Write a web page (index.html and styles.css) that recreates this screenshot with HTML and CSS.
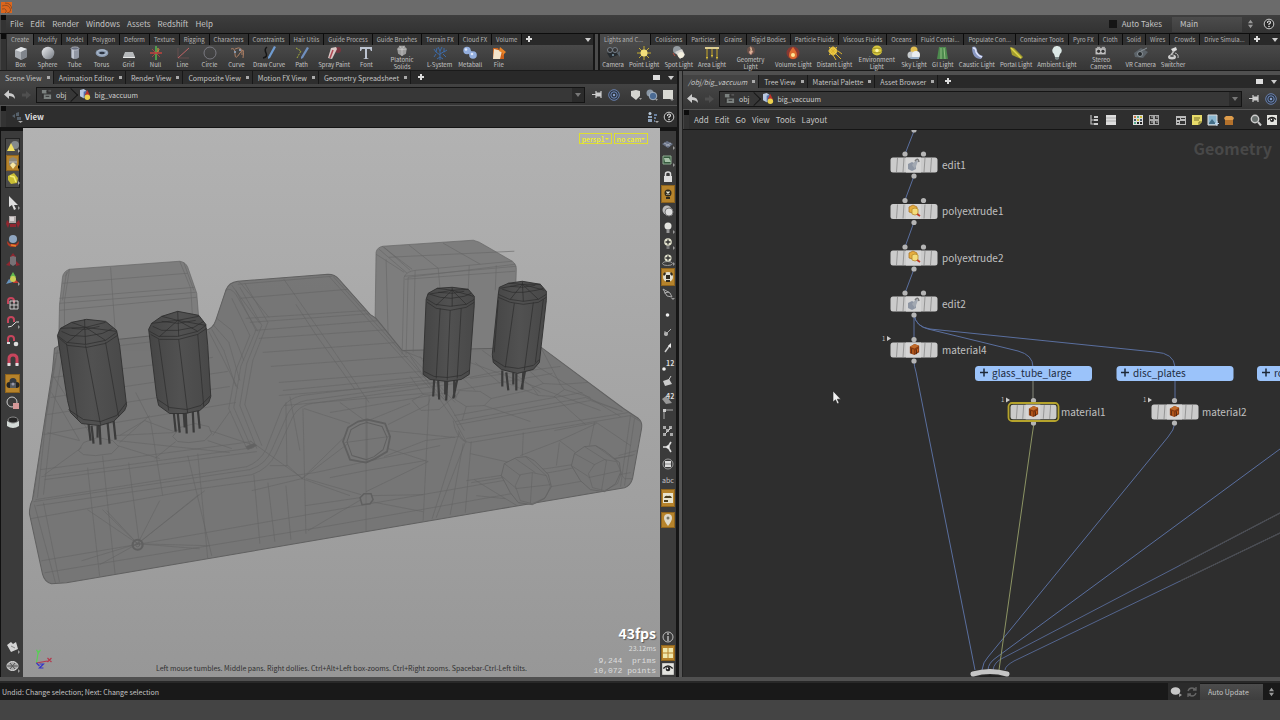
FILE: index.html
```html
<!DOCTYPE html>
<html lang="en">
<head>
<meta charset="utf-8">
<title>big_vaccuum</title>
<link rel="stylesheet" href="styles.css">
</head>
<body>
<svg class="defs" aria-hidden="true">
    <defs>
        <linearGradient id="steel" x1="0" y1="0" x2="1" y2="1"><stop offset="0" stop-color="#eef0f3"/><stop offset="1" stop-color="#72777f"/></linearGradient>
        <linearGradient id="ground" x1="0" y1="0" x2="0" y2="1"><stop offset="0" stop-color="#b2b2b2"/><stop offset="1" stop-color="#979797"/></linearGradient>
        <linearGradient id="tube" x1="0" y1="0" x2="1" y2="0"><stop offset="0" stop-color="#454545"/><stop offset=".5" stop-color="#515151"/><stop offset="1" stop-color="#484848"/></linearGradient>
        <clipPath id="chassis"><path d="M30 513Q30 504 33 499L53 370L55 348L60 345L205 330Q213 329 216 320L226 290Q229 282 238 281L328 274Q335 274 339 279L370 314L376 318L402 350L541 347L623 408L638 418Q642 421 641 428L632 478Q630 485 624 487L330 537L67 582L52 583Q45 581 43 573z"/></clipPath>
    </defs>
    <!-- shelf tools, 14 x 14 -->
    <symbol id="box" viewBox="0 0 14 14"><path d="M1 4l6-3 6 2v8l-6 3-6-3z" fill="#a9adb2"/><path d="M1 4l6 2 6-3-6-2z" fill="#e2e5e8"/><path d="M7 6l6-3v8l-6 3z" fill="#80858c"/></symbol>
    <symbol id="sphere" viewBox="0 0 14 14"><circle cx="7" cy="7" r="6.3" fill="url(#steel)"/></symbol>
    <symbol id="cyl" viewBox="0 0 14 14"><path d="M3 2.500v9q4 3 8 0v-9z" fill="#9297a3"/><path d="M4 3v9l2 .8V3z" fill="#c2c6d0"/><ellipse cx="7" cy="2.500" rx="4" ry="1.600" fill="#6a7080" stroke="#c5c9d2" stroke-width=".7"/></symbol>
    <symbol id="torus" viewBox="0 0 14 14"><ellipse cx="7" cy="7" rx="6.400" ry="4" fill="#8c9cb2"/><ellipse cx="7" cy="6.500" rx="4.500" ry="2.500" fill="none" stroke="#b9c6d6" stroke-width=".8"/><ellipse cx="7" cy="7" rx="2.800" ry="1.200" fill="#2b3340"/></symbol>
    <symbol id="grid" viewBox="0 0 14 14"><path d="M3 6h8l2 5H1z" fill="#b5b8ba"/><path d="M1 11h12v1H1z" fill="#e8e8e8"/></symbol>
    <symbol id="null" viewBox="0 0 14 14"><path d="M7 0v14" stroke="#56b94f" stroke-width="1.500"/><path d="M1 7h12" stroke="#c1443e" stroke-width="1.500"/><path d="M3 3l8 8M11 3l-8 8" stroke="#c1443e" stroke-width=".8"/><path d="M9 2v4" stroke="#dab945"/></symbol>
    <symbol id="line" viewBox="0 0 14 14"><path d="M2 2v10h11" stroke="#755" fill="none" stroke-width=".7"/><path d="M2 12L13 2" stroke="#c26466"/></symbol>
    <symbol id="circle" viewBox="0 0 14 14"><circle cx="7" cy="7" r="6" fill="none" stroke="#87878f" stroke-width=".8"/></symbol>
    <symbol id="curve" viewBox="0 0 14 14"><path d="M1 3q4-2 4 5t5-1 3 5M5 3q8-4 7 6" stroke="#b58568" fill="none" stroke-width=".9"/><path d="M4 5h2v2H4zM9 3h2v2H9z" fill="#8897ac"/></symbol>
    <symbol id="pen" viewBox="0 0 14 14"><path d="M1 12q5-1 3-5T5 1" fill="none" stroke="#151515" stroke-width="1.500"/><path d="M12 0l2 1-6 11-2 1V11z" fill="#6f9bd0"/></symbol>
    <symbol id="path" viewBox="0 0 14 14"><path d="M1 2l5 3-4 7" fill="none" stroke="#a6ae3b" stroke-dasharray="2 1"/><path d="M12 1l2 1-6 10-2 1V11z" fill="#6f8fbd"/></symbol>
    <symbol id="spray" viewBox="0 0 14 14"><circle cx="11" cy="4" r="3" fill="#8c2f3c" opacity=".7"/><path d="M4 2l5-1 1 2-5 10-4-1z" fill="#d9c7c5"/><path d="M6 4l-3 8" stroke="#b04650" stroke-width="1.500"/></symbol>
    <symbol id="font" viewBox="0 0 14 14"><path d="M1 1h12v4h-1l-1-2H8v9l2 1H4l2-1V3H3L2 5H1z" fill="#bcc3d0"/></symbol>
    <symbol id="platonic" viewBox="0 0 14 14"><path d="M4 1h6l3 4-1 6-5 3-5-3-1-6z" fill="#9c9c9c"/><path d="M4 1l3 5 3-5M1 5l6 1 6-1M7 6v8" stroke="#d4d4d4" fill="none" stroke-width=".7"/></symbol>
    <symbol id="lsystem" viewBox="0 0 14 14"><path d="M7 14V5M7 9L3 6M7 8l5-3M3 6L1 3M3 6l1-4M7 5L5 1M7 5l2-4M11 6l3-2M11 6V2M3 8l-2 3M10 8l3 3M7 11l-3 2M7 11l3 2" stroke="#3c6ba9" fill="none"/></symbol>
    <symbol id="metaball" viewBox="0 0 14 14"><path d="M4 4l6 5" stroke="#8ea5d0" stroke-width="4"/><circle cx="4" cy="4.500" r="3.700" fill="#93aedd"/><circle cx="10" cy="9" r="3.800" fill="#93aedd"/><circle cx="3" cy="3.500" r="1.300" fill="#dce6fa"/><circle cx="9" cy="8" r="1.300" fill="#dce6fa"/></symbol>
    <symbol id="file" viewBox="0 0 14 14"><path d="M1 2h5l1 2h5v9H1z" fill="#c95f19"/><path d="M2 3l8 2-2 8H1z" fill="#f3e3ca"/><path d="M8 1l6 5-4 4 1-3-4-2z" fill="#e88327"/></symbol>
    <symbol id="camera" viewBox="0 0 14 14"><path d="M1 7l9-3 2 5-8 3z" fill="#252a2e"/><circle cx="4" cy="4" r="2.500" fill="#333" stroke="#77808a"/><circle cx="9" cy="4" r="2.500" fill="#333" stroke="#77808a"/><path d="M11 7l3-2v6z" fill="#58636c"/><circle cx="7" cy="9" r="1" fill="#7d98a8"/></symbol>
    <symbol id="sun" viewBox="0 0 14 14"><path d="M7 0v14M0 7h14M2 2l10 10M12 2L2 12" stroke="#c4ab2f"/><circle cx="7" cy="7" r="3.500" fill="#f3df7c"/></symbol>
    <symbol id="spot" viewBox="0 0 14 14"><circle cx="5" cy="4" r="4" fill="#949ba1"/><path d="M3 6l7-3 3 6-5 4z" fill="#d6d4d0"/><circle cx="9" cy="9" r="3" fill="#f4f0df"/><path d="M1 7l2 3" stroke="#b84d3e"/></symbol>
    <symbol id="area" viewBox="0 0 14 14"><path d="M0 1h14v2H0z" fill="#dccd91"/><path d="M2 3v9M7 3v7M12 3v9" stroke="#c9a928"/><path d="M1 11l1 3 1-3zM6 9l1 3 1-3zM11 11l1 3 1-3z" fill="#e4c83d"/></symbol>
    <symbol id="geolight" viewBox="0 0 14 14"><circle cx="7" cy="7" r="5" fill="#835949" opacity=".6"/><path d="M6 1q4 4 1 6l3 1-3 5-3-4q4-3 2-8z" fill="#c9968a"/><path d="M6 3l2 4-2 4" fill="none" stroke="#f1d6a2"/></symbol>
    <symbol id="vollight" viewBox="0 0 14 14"><circle cx="7" cy="7" r="6.500" fill="#98352d" opacity=".8"/><path d="M3 9q0-3 4-8 4 5 4 8 0 4-4 4t-4-4z" fill="#df6b2f"/><circle cx="7" cy="9" r="2" fill="#ffe796"/></symbol>
    <symbol id="distant" viewBox="0 0 14 14"><circle cx="5" cy="5" r="4" fill="#efd04d"/><path d="M5 0v10M0 5h10M1 1l8 8M9 1L1 9M8 8l5 5M5 9l3 5M10 5l4 3" stroke="#dcb32f"/></symbol>
    <symbol id="env" viewBox="0 0 14 14"><circle cx="7" cy="7" r="6.500" fill="#d8c83d"/><ellipse cx="7" cy="7" rx="6" ry="3" fill="none" stroke="#8e8124"/><circle cx="7" cy="7" r="2.200" fill="#fff8a8"/></symbol>
    <symbol id="sky" viewBox="0 0 14 14"><circle cx="7" cy="4" r="3.500" fill="#e3bf51"/><circle cx="4" cy="9" r="3.500" fill="#c8ccce"/><circle cx="9" cy="9" r="4" fill="#e9edf0"/><path d="M2 11h10v2H4z" fill="#9ab0c7"/></symbol>
    <symbol id="gi" viewBox="0 0 14 14"><path d="M3 1h7l2 12H1z" fill="#4d8a4e"/><path d="M5 2v11M8 2l1 11" stroke="#92bd82"/></symbol>
    <symbol id="caustic" viewBox="0 0 14 14"><path d="M2 1q4-2 5 3 0 4 6 6l-2 3Q2 13 2 1z" fill="#8897c2"/><path d="M3 2q3 0 3 4 2 4 6 5" stroke="#dfe4fa" fill="none" stroke-width="1.500"/></symbol>
    <symbol id="portal" viewBox="0 0 14 14"><path d="M1 1l4 1 9 9-2 2-9-4z" fill="#a39d2e"/><path d="M2 2l10 10" stroke="#dfd74c" stroke-width="1.500"/></symbol>
    <symbol id="bulb" viewBox="0 0 14 14"><path d="M7 0a4.500 4.500 0 0 0-3 8l1 3h4l1-3a4.500 4.500 0 0 0-3-8z" fill="#dce8e6"/><path d="M5 11h4v2L7 14l-2-1z" fill="#798585"/></symbol>
    <symbol id="stereo" viewBox="0 0 14 14"><path d="M0 4h13v8H0z" fill="#bbb"/><circle cx="4" cy="8" r="2.600" fill="#333" stroke="#eee" stroke-width=".7"/><circle cx="9.500" cy="8" r="2.600" fill="#333" stroke="#eee" stroke-width=".7"/><path d="M2 3h4M8 3h4" stroke="#ddd"/></symbol>
    <symbol id="vr" viewBox="0 0 14 14"><path d="M0 7l7-5 7 4-5 6-8-1z" fill="#5c6369"/><circle cx="6" cy="8" r="2.500" fill="#25292c" stroke="#8a9297"/><path d="M7 5l6-3" stroke="#8a9297"/></symbol>
    <symbol id="switcher" viewBox="0 0 14 14"><path d="M5 3l5-2 1 3-4 2z" fill="#ddd"/><path d="M8 5l-3 4" stroke="#bbb" stroke-width="1.500"/><ellipse cx="6" cy="11" rx="4" ry="2.500" fill="#ccc"/><ellipse cx="6" cy="10" rx="2" ry="1" fill="#555"/><path d="M9 7q4 1 3 5" fill="none" stroke="#bbb"/></symbol>
    <!-- pane icons -->
    <symbol id="back" viewBox="0 0 12 12"><path d="M5 1v3q6 0 6 6-2-3-6-3v3L0 5.500z" fill="currentColor"/></symbol>
    <symbol id="fwd" viewBox="0 0 12 12"><path d="M2 4.500h4V2l5 4-5 4V7.500H2z" fill="currentColor"/></symbol>
    <symbol id="net" viewBox="0 0 12 12"><path d="M1 1h5v4H1zM3 6h8v5H3z" fill="#7c8280"/><path d="M2 5v5M6 3h4M5 8h4" stroke="#2c2c2c"/><path d="M8 1h3v2H8z" fill="#555"/></symbol>
    <symbol id="geo" viewBox="0 0 12 12"><path d="M0 1l4-1 3 2v7l-3 1-4-2z" fill="#b8c7e0"/><path d="M4 3l3-1v7l-3 1z" fill="#5272ab"/><path d="M8 1l3 6H5z" fill="#bd322a"/><circle cx="8" cy="9" r="3" fill="#eed24d"/></symbol>
    <symbol id="pin" viewBox="0 0 12 12"><path d="M4 2v7M4 4h4v3H4zM9 2v7M0 5.500h4" fill="currentColor" stroke="currentColor" stroke-width="1.200"/></symbol>
    <symbol id="rings" viewBox="0 0 12 12"><circle cx="6" cy="6" r="5.300" fill="#2b3442" stroke="#6980ae"/><circle cx="6" cy="6" r="3.200" fill="none" stroke="#6f8abc"/><circle cx="6" cy="6" r="1.200" fill="#8aa0c8"/></symbol>
    <symbol id="shield" viewBox="0 0 12 12"><path d="M1 2l5-1 4 1v5l-4 4-5-4z" fill="#d5d5d0"/><path d="M9 9h3l-1.500 2z" fill="#999"/></symbol>
    <symbol id="blobs" viewBox="0 0 12 12"><circle cx="4" cy="4" r="3.500" fill="#8b98a6"/><circle cx="7" cy="7" r="3.800" fill="#4b6b94" stroke="#b8c3ce" stroke-width=".8"/><path d="M9 10h3l-1.500 2z" fill="#999"/></symbol>
    <symbol id="sheet" viewBox="0 0 12 12"><path d="M1 1h10v9H1z" fill="#d8d8d2"/><path d="M8 10h4l-2 2z" fill="#999"/></symbol>
    <symbol id="help" viewBox="0 0 12 12"><circle cx="6" cy="6" r="4.800" fill="#292929" stroke="#ccc"/><path d="M4.500 5q0-2 1.500-2t1.500 1.300Q7.500 5.500 6 6v1" fill="none" stroke="#ddd" stroke-width="1.200"/><circle cx="6" cy="8.500" r=".8" fill="#ddd"/></symbol>
    <symbol id="tumble" viewBox="0 0 12 12"><path d="M1 5l3-2v4zM5 2l3-1v4H5zM6 6h4v3H6z" fill="#55606a"/><path d="M7 10h5l-2.500 2z" fill="#aaa"/></symbol>
    <symbol id="people" viewBox="0 0 12 12"><circle cx="3" cy="2.500" r="1.500" fill="#bcd"/><path d="M1 5h4v2H1zM1 8h4v3H1z" fill="#8fa3bc"/><path d="M7 4h3M7 7h2M7 10h1" stroke="#7c9ac4" stroke-width="1.500"/><path d="M8 10h4l-2 2z" fill="#aaa"/></symbol>
    <symbol id="tree" viewBox="0 0 12 12"><path d="M2 1v9h3M2 6h3" fill="none" stroke="#bbb" stroke-width="1.200"/><path d="M5 2h4v2H5zM5 5h4v2H5zM5 9h4v2H5z" fill="#ccc"/></symbol>
    <symbol id="list" viewBox="0 0 12 12"><path d="M1 1h10v10H1z" fill="#ddd"/><path d="M1 4h10M1 7h10" stroke="#999" stroke-width=".7"/></symbol>
    <symbol id="colors" viewBox="0 0 12 12"><path d="M1 1h10v10H1z" fill="#ddd"/><path d="M2 2h2v2H2z" fill="#c74"/><path d="M5 2h2v2H5zM2 8h2v2H2z" fill="#5a8"/><path d="M8 2h2v2H8zM5 5h2v2H5z" fill="#cb3"/><path d="M2 5h2v2H2zM8 5h2v2H8z" fill="#456"/><path d="M5 8h2v2H5zM8 8h2v2H8z" fill="#222"/></symbol>
    <symbol id="tiles" viewBox="0 0 12 12"><path d="M1 1h10v10H1z" fill="#aaa"/><path d="M2 2h3v3H2zM7 2h3v3H7zM2 7h3v3H2zM7 7h3v3H7z" fill="#333"/><path d="M3 3h2M8 3h2M3 8h2M8 8h2" stroke="#bbb"/></symbol>
    <symbol id="panel" viewBox="0 0 12 12"><path d="M1 2h10v9H1z" fill="#bbb"/><path d="M2 4h3v2H2zM6 4h4v1H6zM5 7h5v3H5zM2 8h2v1H2z" fill="#333"/></symbol>
    <symbol id="note" viewBox="0 0 12 12"><path d="M1 1h10v7l-3 3H1z" fill="#e7db6a"/><path d="M3 4h6M3 6h5M8 11V8h3" stroke="#776f29" fill="none"/></symbol>
    <symbol id="image" viewBox="0 0 12 12"><path d="M1 1h9v10H1z" fill="#8ab6cf" stroke="#ddd"/><path d="M2 9l3-4 4 5H2z" fill="#426d87"/><path d="M10 7v5M8 9.500h4" stroke="#bcd6ee"/></symbol>
    <symbol id="crate" viewBox="0 0 12 12"><path d="M2 5h8v6H2z" fill="#b3712c"/><path d="M1 4l2-2h6l2 2-1 2H2z" fill="#dd9c4b"/></symbol>
    <symbol id="search" viewBox="0 0 12 12"><circle cx="5" cy="5" r="3.700" fill="#69706e" stroke="#ccc" stroke-width="1.400"/><path d="M8 8l3 3.500" stroke="#ccc" stroke-width="2"/></symbol>
    <symbol id="eye" viewBox="0 0 12 12"><path d="M1 1h10v10H1z" fill="#e3e3df"/><path d="M2 5.500q4-4 8 0" fill="none" stroke="#222" stroke-width="1.200"/><circle cx="6" cy="6" r="2" fill="#222"/><circle cx="5.500" cy="5.500" r=".7" fill="#fff"/></symbol>
    <symbol id="spin" viewBox="0 0 6 12"><path d="M0 5l3-4 3 4zM0 7l3 4 3-4z" fill="currentColor"/></symbol>
    <!-- viewport tools -->
    <symbol id="objects" viewBox="0 0 14 14"><circle cx="9" cy="5" r="4" fill="#858a8c"/><path d="M5 3l4 8H1z" fill="#f0de62"/><path d="M12 9v4l2-2z" fill="#aaa"/></symbol>
    <symbol id="geosel" viewBox="0 0 14 14"><path d="M3 3l4-2 4 2v6l-4 3-4-3z" fill="#8d8676"/><path d="M7 6l3 3-3 4-3-4z" fill="#f8e6a0"/><path d="M3 6h8" stroke="#bbb"/><path d="M12 9v4l2-2z"/></symbol>
    <symbol id="dynamics" viewBox="0 0 14 14"><path d="M2 4l6-3 4 5-1 5-6 1-3-4z" fill="#c9bd33"/><path d="M4 4l4 1 2 5" fill="none" stroke="#f4ed78" stroke-width="1.500"/><path d="M12 9v4l2-2z" fill="#aaa"/></symbol>
    <symbol id="arrow" viewBox="0 0 14 14"><path d="M3 0v11l3-2 2 5 2-1-2-4h4z" fill="#dedede"/><path d="M12 10v4l2-2z" fill="#999"/></symbol>
    <symbol id="move" viewBox="0 0 14 14"><path d="M1 5l3 3-2 5-2-4zM13 5l-3 3 2 5 2-4zM4 9h6v3H4z" fill="#8f2730"/><path d="M3 1h7v7H3z" fill="#afa8a8"/><path d="M4 2h4v4H4z" fill="#dad6d6"/></symbol>
    <symbol id="rotate" viewBox="0 0 14 14"><path d="M1 7q0 6 6 6t6-6l-3 3H4z" fill="#b43a25"/><circle cx="7" cy="5" r="4" fill="#8fa6c0"/><path d="M5 11l5 1" stroke="#e1852c" stroke-width="1.500"/></symbol>
    <symbol id="scale" viewBox="0 0 14 14"><path d="M7 0l3 4H4zM0 12l4-4v5zM14 12l-4-4v5z" fill="#8f2730"/><path d="M4 4l3-1 3 1v7l-3 2-3-2z" fill="#777276"/></symbol>
    <symbol id="handle" viewBox="0 0 14 14"><path d="M7 0l3 5H4z" fill="#62b84f"/><path d="M0 12l3-5 4 3z" fill="#6793bd"/><path d="M13 11L8 6l-1 5z" fill="#c23c32"/><circle cx="7" cy="7" r="3" fill="#c8cf57"/><path d="M12 10v4l2-2z" fill="#999"/></symbol>
    <symbol id="magnet" viewBox="0 0 14 14"><path d="M3 12V6q0-4 4-4t4 4v6" fill="none" stroke="#c7455c" stroke-width="3"/><path d="M1.500 10h3v3h-3zM9.500 10h3v3h-3z" fill="#ddd"/></symbol>
    <symbol id="snapgrid" viewBox="0 0 14 14"><path d="M2 8V5q0-3 3-3t3 3v2" fill="none" stroke="#c7455c" stroke-width="2"/><path d="M4 5h8v8H4zM8 5v8M4 9h8" fill="none" stroke="#ccc"/></symbol>
    <symbol id="snapcurve" viewBox="0 0 14 14"><path d="M2 8V5q0-3 3-3t3 3v2" fill="none" stroke="#c7455c" stroke-width="2"/><path d="M2 12q4 0 6-3t5-2" fill="none" stroke="#ddd"/><path d="M12 10v4l2-2z" fill="#999"/></symbol>
    <symbol id="snappoint" viewBox="0 0 14 14"><path d="M2 8V5q0-3 3-3t3 3v2" fill="none" stroke="#c7455c" stroke-width="2"/><circle cx="10" cy="10" r="2.300" fill="#ddd"/><path d="M1 8h3v2H1z" fill="#ddd"/></symbol>
    <symbol id="shape" viewBox="0 0 14 14"><circle cx="3.500" cy="8" r="3" fill="#242424"/><circle cx="10.500" cy="8" r="3" fill="#242424"/><circle cx="7" cy="4.500" r="3.500" fill="#353a40"/><path d="M4 6h6v5H4z" fill="#555a60"/><circle cx="7" cy="7" r="1.500" fill="#99a"/></symbol>
    <symbol id="camlock" viewBox="0 0 14 14"><circle cx="6" cy="6" r="5" fill="none" stroke="#ccc"/><path d="M7 7h6v6H7z" fill="#d49898"/></symbol>
    <symbol id="render" viewBox="0 0 14 14"><path d="M1 6q6 3 12 0v5q-6 4-12 0z" fill="#d4dad7"/><ellipse cx="7" cy="5" rx="5" ry="3" fill="#252525" stroke="#888"/></symbol>
    <symbol id="cloth" viewBox="0 0 14 14"><path d="M1 5l4-3 2 2 3-2 2 7-7 3z" fill="#d5d5d5"/><path d="M5 6l4 2" stroke="#888"/><path d="M12 10v4l2-2z" fill="#999"/></symbol>
    <symbol id="globe" viewBox="0 0 14 14"><ellipse cx="6.500" cy="7" rx="5.500" ry="4.500" fill="#aaa" stroke="#ddd"/><path d="M4 4l5 6M9 4l-5 6M1 7h11" stroke="#555"/><path d="M12 10v4l2-2z" fill="#999"/></symbol>
    <symbol id="plane" viewBox="0 0 14 14"><path d="M1 6l5-3 6 3-5 4z" fill="#697387"/><path d="M3 5l6 3M10 5L5 8" stroke="#a3aab8"/><path d="M12 8v4l2-2z" fill="#999"/></symbol>
    <symbol id="cache" viewBox="0 0 14 14"><path d="M2 2h8v8H2z" fill="#365a3e" stroke="#8eac91"/><path d="M3 4h5l2 4H4z" fill="#a8c2a9"/><path d="M12 9v4l2-2z" fill="#999"/></symbol>
    <symbol id="lock" viewBox="0 0 14 14"><path d="M3 6h8v6H3z" fill="#ddd"/><path d="M4.500 6V4q0-2 2.500-2t2.500 2v2" fill="none" stroke="#ddd" stroke-width="1.500"/></symbol>
    <symbol id="headlight" viewBox="0 0 14 14"><circle cx="7" cy="6" r="3.500" fill="#302a1c"/><path d="M5.500 4.500l3 3M8.500 4.500l-3 3" stroke="#eed" stroke-width="1.300"/><path d="M5 11h4" stroke="#302a1c" stroke-width="2"/></symbol>
    <symbol id="discs" viewBox="0 0 14 14"><circle cx="6" cy="6" r="4.500" fill="#bbb"/><circle cx="8" cy="8" r="4" fill="#ddd" stroke="#777"/></symbol>
    <symbol id="lamp" viewBox="0 0 14 14"><circle cx="7" cy="5" r="3.500" fill="#e4e4df"/><path d="M5.500 8h3v4h-3z" fill="#999"/><path d="M12 9v4l2-2z" fill="#999"/></symbol>
    <symbol id="lampplus" viewBox="0 0 14 14"><circle cx="7" cy="5" r="3.800" fill="#e4e4cf"/><path d="M7 2.500v5M4.500 5h5" stroke="#333" stroke-width="1.300"/><path d="M5.500 9h3v3h-3z" fill="#777"/><path d="M12 9v4l2-2z" fill="#999"/></symbol>
    <symbol id="lampring" viewBox="0 0 14 14"><ellipse cx="6.500" cy="10.500" rx="5" ry="2" fill="none" stroke="#999"/><circle cx="7" cy="5" r="3.500" fill="#e4e4cf"/><path d="M7 2.500v5M4.500 5h5" stroke="#333" stroke-width="1.300"/><path d="M12 9v4l2-2z" fill="#999"/></symbol>
    <symbol id="mat" viewBox="0 0 14 14"><circle cx="7" cy="7" r="5" fill="#e2dfd1"/><path d="M5 5h4v4H5zM2 4l2-2 1 2-2 2zM12 4l-2-2-1 2 2 2zM5 10h4v2H5z" fill="#2e2a20"/></symbol>
    <symbol id="wires" viewBox="0 0 14 14"><path d="M2 2l4 7 5 1M2 2l7 4 2 4M3 6l5-1" fill="none" stroke="#aaa"/><path d="M10 11h4l-2 2z" fill="#999"/></symbol>
    <symbol id="pt" viewBox="0 0 14 14"><circle cx="6.500" cy="7" r="1.800" fill="#eee"/></symbol>
    <symbol id="ptnorm" viewBox="0 0 14 14"><circle cx="5" cy="9" r="2" fill="#bbb"/><path d="M6 8l4-4M4 6v3h3" stroke="#aaa" fill="none"/></symbol>
    <symbol id="ptarrow" viewBox="0 0 14 14"><path d="M4 11l5-7" stroke="#ccc" stroke-width="1.500"/><path d="M7 5l3 2 0-5z" fill="#eee"/></symbol>
    <symbol id="primnorm" viewBox="0 0 14 14"><path d="M2 7l6-2 3 5-7 2z" fill="#ccc"/><path d="M7 7l3-5" stroke="#ccc"/></symbol>
    <symbol id="hull" viewBox="0 0 14 14"><path d="M3 12V3h9" fill="none" stroke="#aaa"/><path d="M2 2h3v3H2z" fill="#ccc"/></symbol>
    <symbol id="checker" viewBox="0 0 14 14"><path d="M2 2h3v3H2zM8 2h3v3H8zM5 5h3v3H5zM2 9h3v3H2zM9 9h3v3H9z" fill="#aaa"/><path d="M4 10l6-6" stroke="#ccc"/></symbol>
    <symbol id="axes" viewBox="0 0 14 14"><path d="M7 7L2 7M7 7l3-5M7 7l3 5" stroke="#ddd" stroke-width="1.600"/><circle cx="7" cy="7" r="1.700" fill="#eee"/></symbol>
    <symbol id="group" viewBox="0 0 14 14"><circle cx="7" cy="7" r="5" fill="none" stroke="#999"/><path d="M4 4h6v6H4z" fill="#ddd"/><path d="M4 7h6" stroke="#888"/></symbol>
    <symbol id="bgimg" viewBox="0 0 14 14"><path d="M2 2h10v10H2z" fill="#e8e4cf"/><path d="M3 7q1-3 4-2 3-1 4 2zM3 9h4v2H3z" fill="#4a3c1c"/></symbol>
    <symbol id="marker" viewBox="0 0 14 14"><path d="M7 13Q3 8 3 5q0-4 4-4t4 4q0 3-4 8z" fill="#ded9c9"/><circle cx="7" cy="5" r="1.500" fill="#776"/></symbol>
    <symbol id="info" viewBox="0 0 14 14"><circle cx="7" cy="7" r="5" fill="none" stroke="#bbb"/><path d="M7 6v5M7 3v2" stroke="#ccc" stroke-width="1.300"/></symbol>
    <symbol id="quad" viewBox="0 0 14 14"><path d="M2 2h4.500v4.500H2zM7.500 2H12v4.500H7.500zM2 7.500h4.500V12H2zM7.500 7.500H12V12H7.500z" fill="#f0e8ae"/></symbol>
    <!-- network nodes, drawn around their own centre -->
    <symbol id="node" viewBox="-24 -8 48 16" overflow="visible">
        <rect x="-23.500" y="-7.500" width="47" height="15" rx="2.500" fill="#cbcbcb"/>
        <path d="M-8 -7.500h15v15h-15z" fill="#d5d5d5"/>
        <path d="M-17.500 7l1-14M-11 7l1-14M10 7l1-14M16.500 7l1-14" stroke="#888" stroke-width=".8"/>
    </symbol>
    <symbol id="i-edit" viewBox="0 0 14 14"><path d="M1 6l4-2 4 2v5l-4 2-4-2z" fill="#8d95a3"/><path d="M5 7l4-5 2 1-3 8z" fill="#a3a9b2"/><path d="M8 3q3-4 4 1" fill="none" stroke="#777" stroke-width="1.500"/></symbol>
    <symbol id="i-extrude" viewBox="0 0 14 14"><path d="M2 3l4-2 4 2v5l-4 1-4-1z" fill="#e6ad3e" stroke="#a56a1a" stroke-width=".7"/><path d="M5 5l3-1 3 1v5l-3 1-3-1z" fill="#f4dc7c" stroke="#b68a2b" stroke-width=".8"/><path d="M10 10l3 2" stroke="#bf3b28" stroke-width="1.800"/></symbol>
    <symbol id="i-mat" viewBox="0 0 14 14"><path d="M2 4l5-3 5 2v7l-5 3-5-2z" fill="#8a3b10"/><path d="M2 4l5-3 5 2-5 3z" fill="#c06b2b"/><path d="M3 6l3 1v5l-3-2zM8 8l3-2v3l-3 2z" fill="#c96420"/><path d="M4 6v5M9 7v5" stroke="#42200f"/></symbol>
</svg>

<div class="app">
    <div class="titlebar">
        <svg class="logo" viewBox="0 0 11 11"><rect width="11" height="11" fill="#dc661d"/><path d="M1 4q6-2 8 2t-3 5M1 7q3-1 4 1t-1 3M4 1q6 0 7 6" fill="none" stroke="#8a4a20" stroke-width=".9"/></svg>
    </div>

    <header class="menubar">
        <span class="grip"></span>
        <nav class="menu">
            <button>File</button><button>Edit</button><button>Render</button><button>Windows</button><button>Assets</button><button>Redshift</button><button>Help</button>
        </nav>
        <label class="takes"><input type="checkbox">Auto Takes</label>
        <select class="take" aria-label="Take"><option>Main</option></select>
        <svg class="spin"><use href="#spin"/></svg>
        <button class="icon" aria-label="Help"><svg><use href="#help"/></svg></button>
    </header>

    <div class="shelves">
        <span class="grip"></span>
        <section class="shelf shelf-left">
            <div class="shelf-tabs">
                <button class="active">Create</button><button>Modify</button><button>Model</button><button>Polygon</button><button>Deform</button><button>Texture</button><button>Rigging</button><button>Characters</button><button>Constraints</button><button>Hair Utils</button><button>Guide Process</button><button>Guide Brushes</button><button>Terrain FX</button><button>Cloud FX</button><button>Volume</button>
                <button class="add" aria-label="Add shelf"></button><span class="caret"></span>
            </div>
            <div class="tools">
                <button><svg><use href="#box"/></svg>Box</button>
                <button><svg><use href="#sphere"/></svg>Sphere</button>
                <button><svg><use href="#cyl"/></svg>Tube</button>
                <button><svg><use href="#torus"/></svg>Torus</button>
                <button><svg><use href="#grid"/></svg>Grid</button>
                <button><svg><use href="#null"/></svg>Null</button>
                <button><svg><use href="#line"/></svg>Line</button>
                <button><svg><use href="#circle"/></svg>Circle</button>
                <button><svg><use href="#curve"/></svg>Curve</button>
                <button><svg><use href="#pen"/></svg>Draw Curve</button>
                <button><svg><use href="#path"/></svg>Path</button>
                <button><svg><use href="#spray"/></svg>Spray Paint</button>
                <button><svg><use href="#font"/></svg>Font</button>
                <button class="two"><svg><use href="#platonic"/></svg>Platonic<br>Solids</button>
                <button><svg><use href="#lsystem"/></svg>L-System</button>
                <button><svg><use href="#metaball"/></svg>Metaball</button>
                <button><svg><use href="#file"/></svg>File</button>
            </div>
        </section>
        <span class="splitter"></span>
        <section class="shelf shelf-right">
            <div class="shelf-tabs">
                <button class="active">Lights and C...</button><button>Collisions</button><button>Particles</button><button>Grains</button><button>Rigid Bodies</button><button>Particle Fluids</button><button>Viscous Fluids</button><button>Oceans</button><button>Fluid Contai...</button><button>Populate Con...</button><button>Container Tools</button><button>Pyro FX</button><button>Cloth</button><button>Solid</button><button>Wires</button><button>Crowds</button><button>Drive Simula...</button>
                <button class="add" aria-label="Add shelf"></button><span class="caret"></span>
            </div>
            <div class="tools">
                <button><svg><use href="#camera"/></svg>Camera</button>
                <button><svg><use href="#sun"/></svg>Point Light</button>
                <button><svg><use href="#spot"/></svg>Spot Light</button>
                <button><svg><use href="#area"/></svg>Area Light</button>
                <button class="two"><svg><use href="#geolight"/></svg>Geometry<br>Light</button>
                <button><svg><use href="#vollight"/></svg>Volume Light</button>
                <button><svg><use href="#distant"/></svg>Distant Light</button>
                <button class="two"><svg><use href="#env"/></svg>Environment<br>Light</button>
                <button><svg><use href="#sky"/></svg>Sky Light</button>
                <button><svg><use href="#gi"/></svg>GI Light</button>
                <button><svg><use href="#caustic"/></svg>Caustic Light</button>
                <button><svg><use href="#portal"/></svg>Portal Light</button>
                <button><svg><use href="#bulb"/></svg>Ambient Light</button>
                <button class="two"><svg><use href="#stereo"/></svg>Stereo<br>Camera</button>
                <button><svg><use href="#vr"/></svg>VR Camera</button>
                <button><svg><use href="#switcher"/></svg>Switcher</button>
            </div>
        </section>
    </div>

    <main class="desk">
        <section class="pane scene">
            <div class="pane-tabs">
                <button class="active">Scene View<i></i></button><button>Animation Editor<i></i></button><button>Render View<i></i></button><button>Composite View<i></i></button><button>Motion FX View<i></i></button><button>Geometry Spreadsheet<i></i></button>
                <button class="add" aria-label="New tab"></button>
                <span class="max"></span><span class="caret"></span>
            </div>
            <div class="pathbar">
                <button class="icon" aria-label="Back"><svg><use href="#back"/></svg></button>
                <button class="icon dim" aria-label="Forward"><svg><use href="#fwd"/></svg></button>
                <div class="path">
                    <button><svg><use href="#net"/></svg>obj</button><span class="chev"></span><button><svg><use href="#geo"/></svg>big_vaccuum</button>
                    <button class="drop" aria-label="Recent paths"><span class="caret"></span></button>
                </div>
                <button class="icon" aria-label="Pin"><svg><use href="#pin"/></svg></button>
                <button class="icon" aria-label="Link"><svg><use href="#rings"/></svg></button>
                <span class="gap"></span>
                <button class="icon" aria-label="Shading"><svg><use href="#shield"/></svg></button>
                <button class="icon" aria-label="Display"><svg><use href="#blobs"/></svg></button>
                <button class="icon" aria-label="Snapshot"><svg><use href="#sheet"/></svg></button>
            </div>
            <div class="viewbar">
                <span class="grip"></span>
                <button class="view"><svg><use href="#tumble"/></svg>View</button>
                <span class="fill"></span>
                <button class="icon" aria-label="Users"><svg><use href="#people"/></svg></button>
                <button class="icon" aria-label="Help"><svg><use href="#help"/></svg></button>
            </div>
            <div class="stage">
                <div class="side side-left">
                    <div class="set modes">
                        <button aria-label="Objects"><svg><use href="#objects"/></svg></button>
                        <button class="on" aria-label="Geometry"><svg><use href="#geosel"/></svg></button>
                        <button aria-label="Dynamics"><svg><use href="#dynamics"/></svg></button>
                    </div>
                    <div class="set">
                        <button aria-label="Select"><svg><use href="#arrow"/></svg></button>
                        <button aria-label="Move"><svg><use href="#move"/></svg></button>
                        <button aria-label="Rotate"><svg><use href="#rotate"/></svg></button>
                        <button aria-label="Scale"><svg><use href="#scale"/></svg></button>
                        <button aria-label="Handles"><svg><use href="#handle"/></svg></button>
                    </div>
                    <div class="set">
                        <button aria-label="Grid snap"><svg><use href="#snapgrid"/></svg></button>
                        <button aria-label="Curve snap"><svg><use href="#snapcurve"/></svg></button>
                        <button aria-label="Point snap"><svg><use href="#snappoint"/></svg></button>
                        <button aria-label="Snap"><svg><use href="#magnet"/></svg></button>
                    </div>
                    <div class="set">
                        <button class="on" aria-label="View tool"><svg><use href="#shape"/></svg></button>
                        <button aria-label="Lock camera"><svg><use href="#camlock"/></svg></button>
                        <button aria-label="Render region"><svg><use href="#render"/></svg></button>
                    </div>
                    <div class="set last">
                        <button aria-label="Flipbook"><svg><use href="#cloth"/></svg></button>
                        <button aria-label="Render"><svg><use href="#globe"/></svg></button>
                    </div>
                </div>

                <div class="viewport">
                    <svg class="mesh" viewBox="23 128 637 548" preserveAspectRatio="xMidYMid slice">
                        <rect x="23" y="128" width="637" height="548" fill="url(#ground)"/>
                        <!-- transformer housings -->
                        <g fill="#7d7d7d" stroke="#666" stroke-width=".7">
                            <path d="M59 350L60 305L63 277Q64 271 70 269L180 261Q186 262 188 267L197 293L199 318L207 330V350z"/>
                            <path d="M375 322L376 252Q377 247 383 246L473 240L479 242L512 261Q516 264 516 269L515 300L541 348L402 355z" stroke="none"/>
                            <path d="M375 322L376 252Q377 247 383 246L473 240L479 242L512 261Q516 264 516 269L515 300" fill="none"/>
                        </g>
                        <!-- chassis -->
                        <path d="M30 513Q30 504 33 499L53 370L55 348L60 345L205 330Q213 329 216 320L226 290Q229 282 238 281L328 274Q335 274 339 279L370 314L376 318L402 350L541 347L623 408L638 418Q642 421 641 428L632 478Q630 485 624 487L330 537L67 582L52 583Q45 581 43 573z" fill="#757575" fill-opacity=".97" stroke="#606060"/>
                        <g fill="none" stroke="#666" stroke-width=".6">
                            <path d="M63 283L188 273M60 298L195 287M60 303L196 292M60 310L197 297M66 276L70 269M111 267L117 350M70 269L65 300V345M180 261L191 288L193 320M67 272L63 300M184 262L194 290"/>
                            <path d="M376 254L404 272M382 246L412 269M389 257L514 251M404 276L516 266M405 279L515 271M402 354L404 277Q406 271 416 270L512 261M415 270L413 352M406 354L408 277L515 264M386 259L388 334M409 245L438 268M443 243L480 264M438 268L440 290M469 265L468 290M496 265L495 290M379 249L407 273M384 247L410 270"/>
                        </g>
                        <g fill="none" stroke="#646464" stroke-width=".6" clip-path="url(#chassis)">
                            <!-- left shoulder -->
                            <path d="M226 290Q231 287 236 294L258 331M238 281Q241 282 245 288L269 317M232 285L260 323M217 318L232 330L244 360M214 325L229 342L240 380M212 329L224 350L236 386M209 331L222 356L238 388"/>
                            <path d="M238 284L332 276M240 298L348 289M246 318L370 310M250 322L375 313M255 330L382 320M259 338L392 329M263 352L398 342M271 366L408 356M279 382L421 371M283 390L427 376M279 395L436 382M284 405L434 392"/>
                            <path d="M284 279L330 345L369 402M245 283L268 322L253 360L245 404L262 445M240 287L262 325L247 363L240 405L257 448M236 290L256 330L241 366L234 407L252 448M232 298L250 335L236 370L229 408L247 448M296 304L315 333L355 389M333 276L445 400M329 276L430 388M343 284L455 402"/>
                            <!-- deck -->
                            <path d="M55 353L205 335M53 377L213 357M51 397L228 371M48 414L230 386M44 434L236 402M41 469L252 441M42 476L254 447M45 479L257 451M34 501L250 469Q266 464 272 449L288 413Q294 402 306 400L453 380M37 505L252 474Q269 468 276 453L293 416Q299 405 312 403L455 383M36 499L247 466Q260 461 266 449L282 408Q288 398 302 395L450 377"/>
                            <path d="M58 350L47 415L38 497M64 348L53 414L44 494M56 358L42 440L34 496M52 392L80 440M54 376L95 440M45 474L82 447M48 432L80 440M117 440L230 452M118 445L160 458M116 435L174 432M120 442L150 415M136 392L151 421L163 495M213 435L230 411M208 440L232 448M210 430L252 444M177 432L145 420L120 435M176 441L155 458M103 455L116 578M88 467L100 575M129 462L140 545M188 455L212 555M198 453L208 558"/>
                            <!-- front panel -->
                            <path d="M31 518L200 488L315 472L440 445M35 504L56 582M44 502L60 581M42 560L200 533L330 510L560 470L634 454M45 572L330 525L630 472M88 509L138 543L103 509M107 510L138 543L160 500M138 543L205 490M138 543L199 494M138 543L200 548M138 543L210 545M138 543L100 564M138 543L82 560M254 474L260 543M268 482L275 541M286 485L291 539M303 408L306 533M366 396V533M340 402L366 421L410 403M302 478L345 436M302 478L348 443M302 478L350 495M302 478L252 490M303 478L250 440M302 478L288 465L270 465M304 408L350 423M388 448L428 461M386 430L455 437M388 424L428 404L430 398M366 491L428 461M361 494L306 478M361 499L308 530M371 501L423 511M371 495L423 494M305 505L360 497M429 395L423 520M384 456L425 440L459 436M330 412L448 392M330 477L366 470L425 460M290 396L300 450M286 402L287 465"/>
                            <!-- socket holes in the right deck -->
                            <path d="M459 390L480 391L491 398L484 405L466 406L455 399zM532 387L543 383L560 384L564 389L554 396L538 395zM412 400L423 394L440 395L447 402L439 409L421 410z"/>
                            <path d="M455 390L552 373M453 380L530 365M491 398L532 389M560 384L600 381M564 389L590 397M543 383L520 362M560 384L541 348M484 405L530 421M466 406L462 420M432 348L475 390M447 402L459 392M423 394L410 376M475 362L500 383M530 362L620 416M560 366L470 378M554 396L585 424M538 395L500 380M402 350L465 375M410 356L455 421L466 441M420 356L464 430M445 353L600 410M482 350L540 392"/>
                            <path d="M455 421L585 397L617 409M457 424L590 400L622 411M454 415L582 392M458 430Q462 442 470 442L630 415L640 421M453 420Q455 436 466 442M466 438L628 412L638 418M465 442L436 517M463 443L450 514M471 441L465 512M459 432L432 518M523 432L522 455M559 442L556 465M594 422L589 445M630 415L620 486M634 418L624 485M520 455L559 440L596 423M559 440L575 452M476 495L505 498M470 453L510 462M471 482L502 477M474 479L520 507M466 480L632 455M554 430L596 422L630 445M618 455L636 450M618 470L624 478L632 478"/>
                        </g>
                        <!-- dial, knobs and jacks -->
                        <g fill="none" stroke="#606060">
                            <path d="M343 441L348 427L358 421L367 419L385 423L390 436L387 451L375 458L366 462L350 459z" stroke-width="1.800"/>
                            <path d="M347 441L351 429L360 424L367 422L382 426L387 437L383 449L374 456L366 459L352 455z" stroke-width="1"/>
                            <path d="M345 442L389 436M367 419V462" stroke-width=".5"/>
                            <path d="M360 497L364 493L371 493L373 499L370 503L362 504z" stroke-width="1.500"/>
                            <circle cx="138" cy="544" r="5" stroke-width="2.200"/>
                            <circle cx="138" cy="544" r="2" stroke-width=".6"/>
                        </g>
                        <g fill="#757575" stroke="#636363" stroke-width=".8">
                            <path d="M501 475L504 463L516 457L526 456L534 460L548 474L551 486L544 498L532 504L518 502L510 492z"/>
                            <path d="M571 465L574 453L584 446L595 445L604 450L619 462L620 472L615 483L604 491L590 489L580 480z"/>
                            <path d="M515 485L520 474L532 472L546 475L550 486L545 497L532 503L520 500zM588 473L594 464L604 459L616 461L621 472L617 483L604 490L592 487zM501 475L515 487M504 463L520 475M515 458L535 472M525 456L546 475M571 465L588 476M574 453L594 464M584 446L606 460M595 445L617 461M532 472L530 503M515 488L550 484M606 460L601 490M588 477L620 470" fill="none" stroke-width=".6"/>
                        </g>
                        <g fill="none" stroke="#646464" stroke-width=".7">
                            <path d="M79 450L84 442L98 437L113 440L119 446L112 453L96 455L84 454zM173 436L180 427L195 423L209 426L212 433L205 440L189 442L178 441z"/>
                            <path d="M246 446l8-3 3 2-9 4z" fill="#626262"/>
                        </g>
                        <!-- vacuum tube pins -->
                        <g stroke="#3b3b3b" stroke-width="2.200" fill="none">
                            <path d="M89 423l2 17M92 425l2 18M100 424l1 20M108 422l2 21M114 420l2 19M98 425v12M174 411l2 20M178 412l2 20M186 412l1 21M193 410l1 22M198 408l2 20M184 412l1 15"/>
                            <path d="M434 379l-1 17M438 380l1 19M447 380l-1 20M454 379v18M457 379l-4 19M445 380v14M502 370v16M506 372l2 18M516 373v17M523 371l-1 18M525 369l-4 20M513 372v12"/>
                        </g>
                        <g fill="url(#tube)" stroke="#303030" stroke-width=".9">
                            <path d="M58 335L61 328L72 322L87 319L106 321L117 330L120 345L127 405L125 410L114 421L100 425L82 423L71 412L68 400z"/>
                            <path d="M149 329L152 323L162 316L178 311L199 315L206 324L208 345L211 396L209 402L200 410L185 413L170 413L159 405L157 396z"/>
                            <path d="M426 299L428 293L437 288L452 287L468 289L474 296V305L469 374L461 379L447 381L430 379L423 374V368z"/>
                            <path d="M498 294L499 287L508 283L522 281L540 284L546 291V300L539 362L533 369L517 373L501 369L493 362L492 354z"/>
                        </g>
                        <g fill="none" stroke="#2d2d2d" stroke-width=".7">
                            <path d="M59 336L67 342L86 344L106 340L117 332M60 338L68 345L87 347L106 343L118 335M62 331L71 335L86 336L103 333L113 328M72 328L86 329L100 326M67 343L78 418M86 345L101 424M106 342L119 416M85 319L86 344M61 328L86 327L117 331M69 409L84 419L101 421L117 415L127 402M72 322L86 327L106 322M86 327L68 342M86 327L106 340"/>
                            <path d="M150 331L159 336L178 336L198 331L206 325M151 334L160 339L179 339L198 334L207 328M153 326L162 330L178 330L194 327L204 321M162 321L178 323L196 320M159 339L169 410M179 339L188 413M198 334L204 406M178 311L179 336M152 323L178 320L206 325M158 399L170 407L187 409L201 405L211 395M162 316L178 320L199 316M178 320L160 336M178 320L198 331"/>
                            <path d="M427 299L435 304L450 306L466 304L474 299M427 302L436 308L450 310L466 307L474 302M430 294L440 297L451 298L464 296L471 293M438 292L452 293L464 291M440 308L436 378M450 310L447 380M461 308L457 378M428 294L452 290L473 296M452 287V306M424 371L434 376L447 377L461 375L469 370M437 288L452 290L468 289M452 290L436 305M452 290L466 304"/>
                            <path d="M498 294L509 299L523 301L538 299L546 294M498 297L510 302L523 304L538 302L546 297M502 289L512 292L523 292L536 290L543 288M510 286L522 287L535 285M514 303L505 367M533 302L524 370M500 288L522 284L544 290M522 281L523 301M493 359L504 366L518 368L533 365L539 359M508 283L522 284L540 284M522 284L510 299M522 284L538 299M498 300L494 352M543 299L535 362"/>
                        </g>
                        <!-- axis gnomon -->
                        <g fill="none" stroke-width="1.200">
                            <path d="M37 662L39 650" stroke="#58cf55"/><path d="M37 649l2 3 2-3" stroke="#58cf55"/>
                            <path d="M37 662L48 660M48 657l4 4M52 657l-4 4" stroke="#b43a4e"/>
                            <path d="M37 662l3 3M40 663h4l-4 4h4" stroke="#3535c8"/>
                        </g>
                    </svg>
                    <div class="cams"><button>persp1<b></b></button><button>no cam<b></b></button></div>
                    <p class="hint">Left mouse tumbles. Middle pans. Right dollies. Ctrl+Alt+Left box-zooms. Ctrl+Right zooms. Spacebar-Ctrl-Left tilts.</p>
                    <div class="stats"><strong>43fps</strong><span>23.12ms</span><pre>9,244  prims
10,072 points</pre></div>
                </div>

                <div class="side side-right">
                    <div class="set s10">
                        <button aria-label="Reference plane"><svg><use href="#plane"/></svg></button>
                        <button aria-label="Cache"><svg><use href="#cache"/></svg></button>
                        <button aria-label="Lock"><svg><use href="#lock"/></svg></button>
                        <button class="on" aria-label="Headlight"><svg><use href="#headlight"/></svg></button>
                        <button aria-label="Shadows"><svg><use href="#discs"/></svg></button>
                        <button aria-label="Light"><svg><use href="#lamp"/></svg></button>
                        <button aria-label="Add light"><svg><use href="#lampplus"/></svg></button>
                        <button aria-label="High quality light"><svg><use href="#lampring"/></svg></button>
                        <button class="on" aria-label="Materials"><svg><use href="#mat"/></svg></button>
                        <button aria-label="Wireframe"><svg><use href="#wires"/></svg></button>
                    </div>
                    <div class="set s12">
                        <button aria-label="Points"><svg><use href="#pt"/></svg></button>
                        <button aria-label="Point normals"><svg><use href="#ptnorm"/></svg></button>
                        <button aria-label="Point trails"><svg><use href="#ptarrow"/></svg></button>
                        <button aria-label="Point numbers"><svg viewBox="0 0 14 14"><circle cx="3" cy="11" r="1.800" fill="#eee"/><text class="digits" x="5" y="8">12</text></svg></button>
                        <button aria-label="Primitive normals"><svg><use href="#primnorm"/></svg></button>
                        <button aria-label="Primitive numbers"><svg viewBox="0 0 14 14"><path d="M1 8l4-3 6 7-6 1z" fill="#999"/><text class="digits" x="5" y="8">42</text></svg></button>
                        <button aria-label="Hulls"><svg><use href="#hull"/></svg></button>
                        <button aria-label="Texture"><svg><use href="#checker"/></svg></button>
                        <button aria-label="Axes"><svg><use href="#axes"/></svg></button>
                        <button aria-label="Groups"><svg><use href="#group"/></svg></button>
                        <button class="abc">abc</button>
                        <button class="on" aria-label="Background"><svg><use href="#bgimg"/></svg></button>
                    </div>
                    <div class="set"><button class="on" aria-label="Markers"><svg><use href="#marker"/></svg></button></div>
                    <div class="set last">
                        <button aria-label="Info"><svg><use href="#info"/></svg></button>
                        <button class="on" aria-label="Layout"><svg><use href="#quad"/></svg></button>
                        <button aria-label="Visibility"><svg><use href="#eye"/></svg></button>
                    </div>
                </div>
            </div>
        </section>

        <span class="divider"></span>

        <section class="pane network">
            <div class="pane-tabs">
                <button class="active"><em>/obj/big_vaccuum</em><i></i></button><button>Tree View<i></i></button><button>Material Palette<i></i></button><button>Asset Browser<i></i></button>
                <button class="add" aria-label="New tab"></button>
                <span class="max"></span><span class="caret"></span>
            </div>
            <div class="pathbar">
                <button class="icon" aria-label="Back"><svg><use href="#back"/></svg></button>
                <button class="icon dim" aria-label="Forward"><svg><use href="#fwd"/></svg></button>
                <div class="path">
                    <button><svg><use href="#net"/></svg>obj</button><span class="chev"></span><button><svg><use href="#geo"/></svg>big_vaccuum</button>
                    <button class="drop" aria-label="Recent paths"><span class="caret"></span></button>
                </div>
                <button class="icon" aria-label="Pin"><svg><use href="#pin"/></svg></button>
                <button class="icon" aria-label="Link"><svg><use href="#rings"/></svg></button>
            </div>
            <div class="netbar">
                <span class="grip"></span>
                <nav class="menu"><button>Add</button><button>Edit</button><button>Go</button><button>View</button><button>Tools</button><button>Layout</button></nav>
                <div class="icons"><button class="icon" aria-label="Tree"><svg><use href="#tree"/></svg></button><button class="icon" aria-label="List"><svg><use href="#list"/></svg></button></div>
                <div class="icons"><button class="icon" aria-label="Palette"><svg><use href="#colors"/></svg></button><button class="icon" aria-label="Shapes"><svg><use href="#tiles"/></svg></button></div>
                <div class="icons"><button class="icon" aria-label="Network box"><svg><use href="#panel"/></svg></button><button class="icon" aria-label="Sticky note"><svg><use href="#note"/></svg></button><button class="icon" aria-label="Image"><svg><use href="#image"/></svg></button><button class="icon" aria-label="Asset"><svg><use href="#crate"/></svg></button></div>
                <div class="icons"><button class="icon" aria-label="Find"><svg><use href="#search"/></svg></button><button class="icon" aria-label="Display"><svg><use href="#eye"/></svg></button></div>
            </div>
            <div class="graph">
                <svg viewBox="683 130 597 547" preserveAspectRatio="xMinYMin slice">
                    <text class="context" x="1272" y="155" text-anchor="end">Geometry</text>
                    <!-- wires -->
                    <g fill="none" stroke="#5a6f9f" stroke-width="1">
                        <path d="M914 131L905 154M914 176L905 200M914 222L905 247M914 269L905 293M914 315V339"/>
                        <path d="M914 315Q916 326 928 329L1018 351Q1033 355 1033 367"/>
                        <path d="M914 315Q916 327 930 329L1155 352Q1174 353 1175 367V400"/>
                        <path d="M914 361Q914 366 916 372L975 670"/>
                        <path d="M1175 423Q1174 430 1168 437L988 657Q983 662 982 670"/>
                        <path d="M1280 449L997 657Q988 663 988 670"/>
                        <path d="M1280 513L1003 658Q994 662 993 670" opacity=".85"/>
                        <path d="M1280 533L1014 661Q1005 666 1005 670" opacity=".85"/>
                    </g>
                    <path d="M1033 380V400" stroke="#85887a"/>
                    <path d="M1034 423L1032 436L999 670" fill="none" stroke="#8c9464"/>
                    <g stroke="#4c4c4c" stroke-width="1.200"><path d="M1280 513L1180 565M1280 533L1180 581"/></g>
                    <g fill="#b5b5b5">
                        <circle cx="914" cy="130" r="2.600"/>
                        <circle cx="905" cy="154" r="2.600"/><circle cx="923.500" cy="154" r="2.600"/><circle cx="914" cy="176" r="2.600"/>
                        <circle cx="905" cy="200.500" r="2.600"/><circle cx="923.500" cy="200.500" r="2.600"/><circle cx="914" cy="222.500" r="2.600"/>
                        <circle cx="905" cy="247" r="2.600"/><circle cx="923.500" cy="247" r="2.600"/><circle cx="914" cy="269" r="2.600"/>
                        <circle cx="905" cy="293" r="2.600"/><circle cx="923.500" cy="293" r="2.600"/><circle cx="914" cy="315" r="2.600"/>
                        <circle cx="914" cy="339.500" r="2.600"/><circle cx="914" cy="361" r="2.600"/>
                        <circle cx="1033.500" cy="400.500" r="2.600"/><circle cx="1033.500" cy="423" r="2.600"/>
                        <circle cx="1174.500" cy="400.500" r="2.600"/><circle cx="1174.500" cy="423" r="2.600"/>
                    </g>
                    <rect x="1008.500" y="403" width="50" height="18" rx="3.500" fill="#2d2d20" stroke="#b5a32c" stroke-width="1.800"/>
                    <use href="#node" x="890" y="157" width="48" height="16"/><use href="#i-edit" x="907" y="158" width="14" height="14"/>
                    <use href="#node" x="890" y="203.500" width="48" height="16"/><use href="#i-extrude" x="907" y="204" width="14" height="14"/>
                    <use href="#node" x="890" y="250" width="48" height="16"/><use href="#i-extrude" x="907" y="250" width="14" height="14"/>
                    <use href="#node" x="890" y="296" width="48" height="16"/><use href="#i-edit" x="907" y="297" width="14" height="14"/>
                    <use href="#node" x="890" y="342" width="48" height="16"/><use href="#i-mat" x="908" y="343" width="13" height="13"/>
                    <use href="#node" x="1010" y="404" width="47" height="16"/><use href="#i-mat" x="1027" y="405" width="13" height="13"/>
                    <use href="#node" x="1151" y="404" width="48" height="16"/><use href="#i-mat" x="1168" y="405" width="13" height="13"/>
                    <path d="M973 674Q990 669 1007 674" fill="none" stroke="#c6c6c6" stroke-width="5" stroke-linecap="round"/>
                    <path d="M976 677Q990 673 1004 677z" fill="#222"/>
                    <g class="names">
                        <text x="942" y="169">edit1</text><text x="942" y="215">polyextrude1</text><text x="942" y="262">polyextrude2</text>
                        <text x="942" y="308">edit2</text><text x="942" y="354">material4</text>
                        <text x="1061" y="416">material1</text><text x="1202" y="416">material2</text>
                    </g>
                    <g class="marks"><text x="882" y="341">1</text><text x="1001" y="402">1</text><text x="1143" y="402">1</text></g>
                    <path d="M887 336v5l4-2.500zM1006 397.500v5l4-2.500zM1148 397.500v5l4-2.500z" fill="#ccc"/>
                    <!-- collapsed network boxes -->
                    <g fill="#9bc3fa"><rect x="975" y="366" width="117" height="15" rx="3.500"/><rect x="1116.500" y="366" width="117" height="15" rx="3.500"/><rect x="1257" y="366" width="117" height="15" rx="3.500"/></g>
                    <path d="M980 372.500h8M984 368.500v8M1121 372.500h8M1125 368.500v8M1262 372.500h8M1266 368.500v8" stroke="#1d2838" stroke-width="1.500"/>
                    <g class="boxes"><text x="992" y="377">glass_tube_large</text><text x="1133" y="377">disc_plates</text><text x="1274" y="377">ro</text></g>
                    <path d="M833 391v11l2.500-2.200 1.800 4 1.800-.8-1.800-3.800h3.500z" fill="#f2f2f2" stroke="#222" stroke-width=".6"/>
                </svg>
            </div>
        </section>
    </main>

    <div class="edge"></div>
    <footer class="status">
        <span class="message">Undid: Change selection; Next: Change selection</span>
        <button class="icon" aria-label="Cook"><svg viewBox="0 0 12 12"><ellipse cx="5.500" cy="5" rx="4.800" ry="3.800" fill="#c8c8c8"/><path d="M9 7v4l3-2z" fill="#999"/></svg></button>
        <button class="icon" aria-label="Refresh"><svg viewBox="0 0 12 12"><path d="M2 5q1-3 4-3 2 0 4 2M10 7q-1 3-4 3-2 0-4-2M10 1v3H7M2 11V8h3" fill="none" stroke="#666" stroke-width="1.300"/></svg></button>
        <select class="update" aria-label="Update mode"><option>Auto Update</option></select>
        <svg class="spin"><use href="#spin"/></svg>
    </footer>
    <div class="bottom"></div>
</div>
</body>
</html>
```
FILE: styles.css
```css
* {
    box-sizing: border-box;
}

body {
    margin: 0;
    background: #444;
    color: #c4c4c4;
    font-family: "Noto Sans CJK SC", "Noto Sans", sans-serif;
    font-size: 7px;
    line-height: 10px;
    overflow: hidden;
}

button,
select,
input {
    margin: 0;
    padding: 0;
    border: 0;
    border-radius: 0;
    background: none;
    color: inherit;
    font: inherit;
    white-space: nowrap;
}

svg {
    display: block;
    flex: none;
}

.defs {
    position: absolute;
    width: 0;
    height: 0;
}

.app {
    display: flex;
    flex-direction: column;
    height: 100vh;
}

.titlebar {
    flex: none;
    height: 15px;
    padding: 2px 1px;
    background: #6b6b6b;
}

.logo {
    width: 11px;
    height: 11px;
}

.grip {
    flex: none;
    align-self: stretch;
    width: 6px;
    margin-right: 1px;
    border-left: 1px solid #444;
    background: linear-gradient(#0c0c0c 5px, #333 5px);
}

.icon {
    flex: none;
    width: 16px;
    height: 14px;
    display: flex;
    align-items: center;
    justify-content: center;
    color: #ccc;
}

.icon svg {
    width: 12px;
    height: 12px;
}

.icon.dim {
    color: #4f4f4f;
}

.caret {
    flex: none;
    width: 0;
    height: 0;
    border: 3px solid transparent;
    border-top: 4px solid #ccc;
    border-bottom: 0;
}

.spin {
    width: 5px;
    height: 10px;
    color: #999;
}

/* menu bar */
.menubar {
    flex: none;
    display: flex;
    align-items: center;
    height: 18px;
    padding-right: 3px;
    background: linear-gradient(#3e3e3e, #323232);
}

.menu {
    flex: 1;
    display: flex;
    gap: 7px;
    padding-left: 3px;
    font-size: 8px;
    line-height: 12px;
}

.takes {
    display: flex;
    align-items: center;
    gap: 5px;
    font-size: 8px;
}

.takes input {
    appearance: none;
    width: 8px;
    height: 8px;
    background: #151515;
}

.take,
.update {
    appearance: none;
    background: linear-gradient(#4c4c4c, #3e3e3e);
}

.take {
    width: 70px;
    height: 15px;
    margin: 0 6px 0 10px;
    padding-left: 8px;
    font-size: 8px;
}

.menubar .icon {
    margin-left: 8px;
}

/* shelves */
.shelves {
    flex: none;
    display: flex;
    height: 38px;
    border-top: 1px solid #0d0d0d;
    border-bottom: 1px solid #1b1b1b;
    background: #292929;
}

.shelf {
    min-width: 0;
    font-size: 6px;
    line-height: 6px;
}

.shelf-left {
    flex: 586;
}

.shelf-right {
    flex: 680;
}

.splitter {
    flex: none;
    width: 7px;
    border-left: 2px solid #171717;
    border-right: 2px solid #171717;
    background: #4c4c4c;
}

.shelf-tabs {
    display: flex;
    align-items: center;
    height: 11px;
    padding-right: 2px;
}

.shelf-tabs button {
    flex: none;
    height: 11px;
    padding: 0 4px;
    border-right: 1px solid #0c0c0c;
    background: #303030;
    color: #b4b4b4;
}

.shelf-tabs .active {
    background: #494949;
}

.shelf-right .active {
    padding-right: 7px;
}

.shelf-tabs .add {
    border-right: 0;
    background: none;
}

.add::before,
.add::after {
    content: "";
    display: block;
    background: #ddd;
}

.add::before {
    width: 6px;
    height: 2px;
}

.add::after {
    width: 2px;
    height: 6px;
    margin: -4px 2px 0;
}

.shelf-tabs .caret {
    margin-left: auto;
}

.tools {
    display: flex;
    height: 25px;
    background: linear-gradient(#494949, #363636);
}

.tools button {
    flex: none;
    display: flex;
    flex-direction: column;
    align-items: center;
    min-width: 27px;
    height: 25px;
    padding: 1px 3px 0;
    text-align: center;
}

.shelf-right .tools button {
    padding-left: 2px;
}

.tools svg {
    width: 14px;
    height: 14px;
    margin-bottom: 2px;
}

.tools .two {
    min-width: 44px;
    padding-top: 0;
    line-height: 7px;
}

.tools .two svg {
    width: 12px;
    height: 11px;
    margin-bottom: 0;
}

/* panes */
.desk {
    flex: 1;
    min-height: 0;
    display: flex;
}

.pane {
    min-width: 0;
    display: flex;
    flex-direction: column;
    background: #2b2b2b;
}

.scene {
    flex: 677;
}

.network {
    flex: 597;
    border-top: 4px solid #505050;
}

.divider {
    flex: none;
    width: 6px;
    border-left: 2px solid #161616;
    border-right: 1px solid #222;
    background: #555;
}

.pane-tabs {
    flex: none;
    display: flex;
    align-items: center;
    height: 13px;
    padding-right: 3px;
    background: #292929;
}

.pane-tabs button {
    flex: none;
    display: flex;
    align-items: center;
    height: 13px;
    padding: 0 3px 0 5px;
    border-right: 1px solid #181818;
    background: #2e2e2e;
}

.pane-tabs .active {
    background: #434343;
}

.pane-tabs i {
    width: 3px;
    height: 3px;
    margin-left: 5px;
    background: #aaa;
}

.pane-tabs .add {
    display: block;
    padding: 4px 7px;
    border-right: 0;
    background: none;
}

.max {
    width: 7px;
    height: 5px;
    margin-left: auto;
    margin-right: 8px;
    background: #ddd;
}

.pathbar {
    flex: none;
    display: flex;
    align-items: center;
    height: 22px;
    padding: 0 1px 0 2px;
    background: linear-gradient(#434343, #353535);
    border-bottom: 1px solid #555;
}

.path {
    flex: 1;
    display: flex;
    align-items: center;
    height: 16px;
    margin: 0 5px 0 2px;
    padding-left: 4px;
    border: 1px solid #141414;
    background: #373737;
}

.path button {
    display: flex;
    align-items: center;
    gap: 4px;
    color: #d0d0d0;
}

.path button svg {
    width: 11px;
    height: 11px;
}

.chev {
    width: 10px;
    height: 10px;
    margin: 0 4px 0 -1px;
    border-top: 1px solid #181818;
    border-right: 1px solid #181818;
    transform: rotate(45deg);
}

.path .drop {
    height: 14px;
    margin-left: auto;
    padding: 0 3px;
    background: #2b2b2b;
}

.drop .caret {
    border-top-color: #777;
}

.gap {
    width: 6px;
}

.viewbar,
.netbar {
    flex: none;
    display: flex;
    align-items: center;
    background: #2e2e2e;
    border-bottom: 1px solid #151515;
}

.viewbar {
    height: 22px;
}

.netbar {
    height: 20px;
}

.view {
    display: flex;
    align-items: center;
    gap: 2px;
    margin-left: 4px;
    font-size: 8px;
    font-weight: 700;
    color: #ddd;
}

.view svg {
    width: 12px;
    height: 12px;
}

.fill {
    flex: 1;
}

.netbar .menu {
    gap: 6px;
    padding-left: 4px;
}

.icons {
    display: flex;
    margin-left: 11px;
}

/* 3D view */
.stage {
    flex: 1;
    min-height: 0;
    display: flex;
}

.side {
    flex: none;
    display: flex;
    flex-direction: column;
    background: #3b3b3b;
    border-top: 3px solid #141414;
}

.side-left {
    width: 23px;
    padding: 7px 3px 2px 4px;
    border-left: 1px solid #111;
}

.side-right {
    width: 17px;
    padding: 6px 1px 0 1px;
    border-right: 1px solid #151515;
}

.set {
    flex: none;
    display: flex;
    flex-direction: column;
}

.set button {
    flex: 1;
    display: flex;
    align-items: center;
    justify-content: center;
}

.set .on {
    background: #b6832b;
    border: 1px solid #8f641d;
}

.set svg {
    width: 14px;
    height: 14px;
}

.digits {
    font-size: 7px;
    font-weight: 700;
    fill: #ddd;
}

.side-left .set {
    margin-bottom: 5px;
}

.side-left .set button {
    flex: none;
    height: 19px;
}

.side-left .modes {
    border: 1px solid #222;
    background: #4a4a4a;
}

.side-left .modes button {
    height: 16px;
}

.side-right .set {
    margin-bottom: 5px;
}

.side-right .set button {
    min-height: 16px;
}

.side-right .s10 {
    height: 165px;
}

.side-right .s12 {
    height: 200px;
}

.side .last {
    margin-top: auto;
    margin-bottom: 0;
}

.viewport {
    flex: 1;
    min-width: 0;
    position: relative;
    overflow: hidden;
}

.mesh {
    width: 100%;
    height: 100%;
}

.cams {
    position: absolute;
    top: 5px;
    right: 12px;
    display: flex;
    gap: 2px;
}

.cams button {
    display: flex;
    align-items: center;
    height: 11px;
    padding: 0 2px;
    border: 1px solid #dede30;
    color: #f0f028;
    font-weight: 500;
}

.cams b {
    border: 2px solid transparent;
    border-top: 2px solid #f0f028;
    border-bottom: 0;
}

.hint {
    position: absolute;
    left: 0;
    right: 0;
    bottom: 4px;
    margin: 0;
    text-align: center;
    color: #303030;
}

.stats {
    position: absolute;
    right: 4px;
    bottom: 1px;
    text-align: right;
    color: #ddd;
}

.stats strong {
    display: block;
    color: #fff;
    font-size: 14px;
    line-height: 20px;
    text-shadow: 1px 1px 1px #555;
}

.stats pre {
    margin: 3px 0 0;
    font-family: "Liberation Mono", monospace;
    font-size: 8px;
    line-height: 10px;
}

/* network editor */
.graph {
    flex: 1;
    min-height: 0;
    background: #2e2e2e;
    overflow: hidden;
}

.graph svg {
    width: 100%;
    height: 100%;
}

.context {
    font-size: 16px;
    font-weight: 700;
    fill: #484848;
}

.names {
    font-size: 10px;
    fill: #c0c0c0;
}

.boxes {
    font-size: 10px;
    fill: #1d2c42;
}

.marks {
    font-size: 6px;
    fill: #bbb;
}

/* footer */
.edge {
    flex: none;
    height: 6px;
    border-bottom: 2px solid #282828;
    background: #505050;
}

.status {
    flex: none;
    display: flex;
    align-items: center;
    height: 17px;
    padding-right: 6px;
    background: #191919;
}

.message {
    flex: 1;
    padding-left: 2px;
}

.status .icon {
    height: 17px;
    background: #2b2b2b;
}

.update {
    width: 63px;
    height: 16px;
    margin-right: 6px;
    padding-left: 8px;
}

.bottom {
    flex: none;
    height: 20px;
}
```
